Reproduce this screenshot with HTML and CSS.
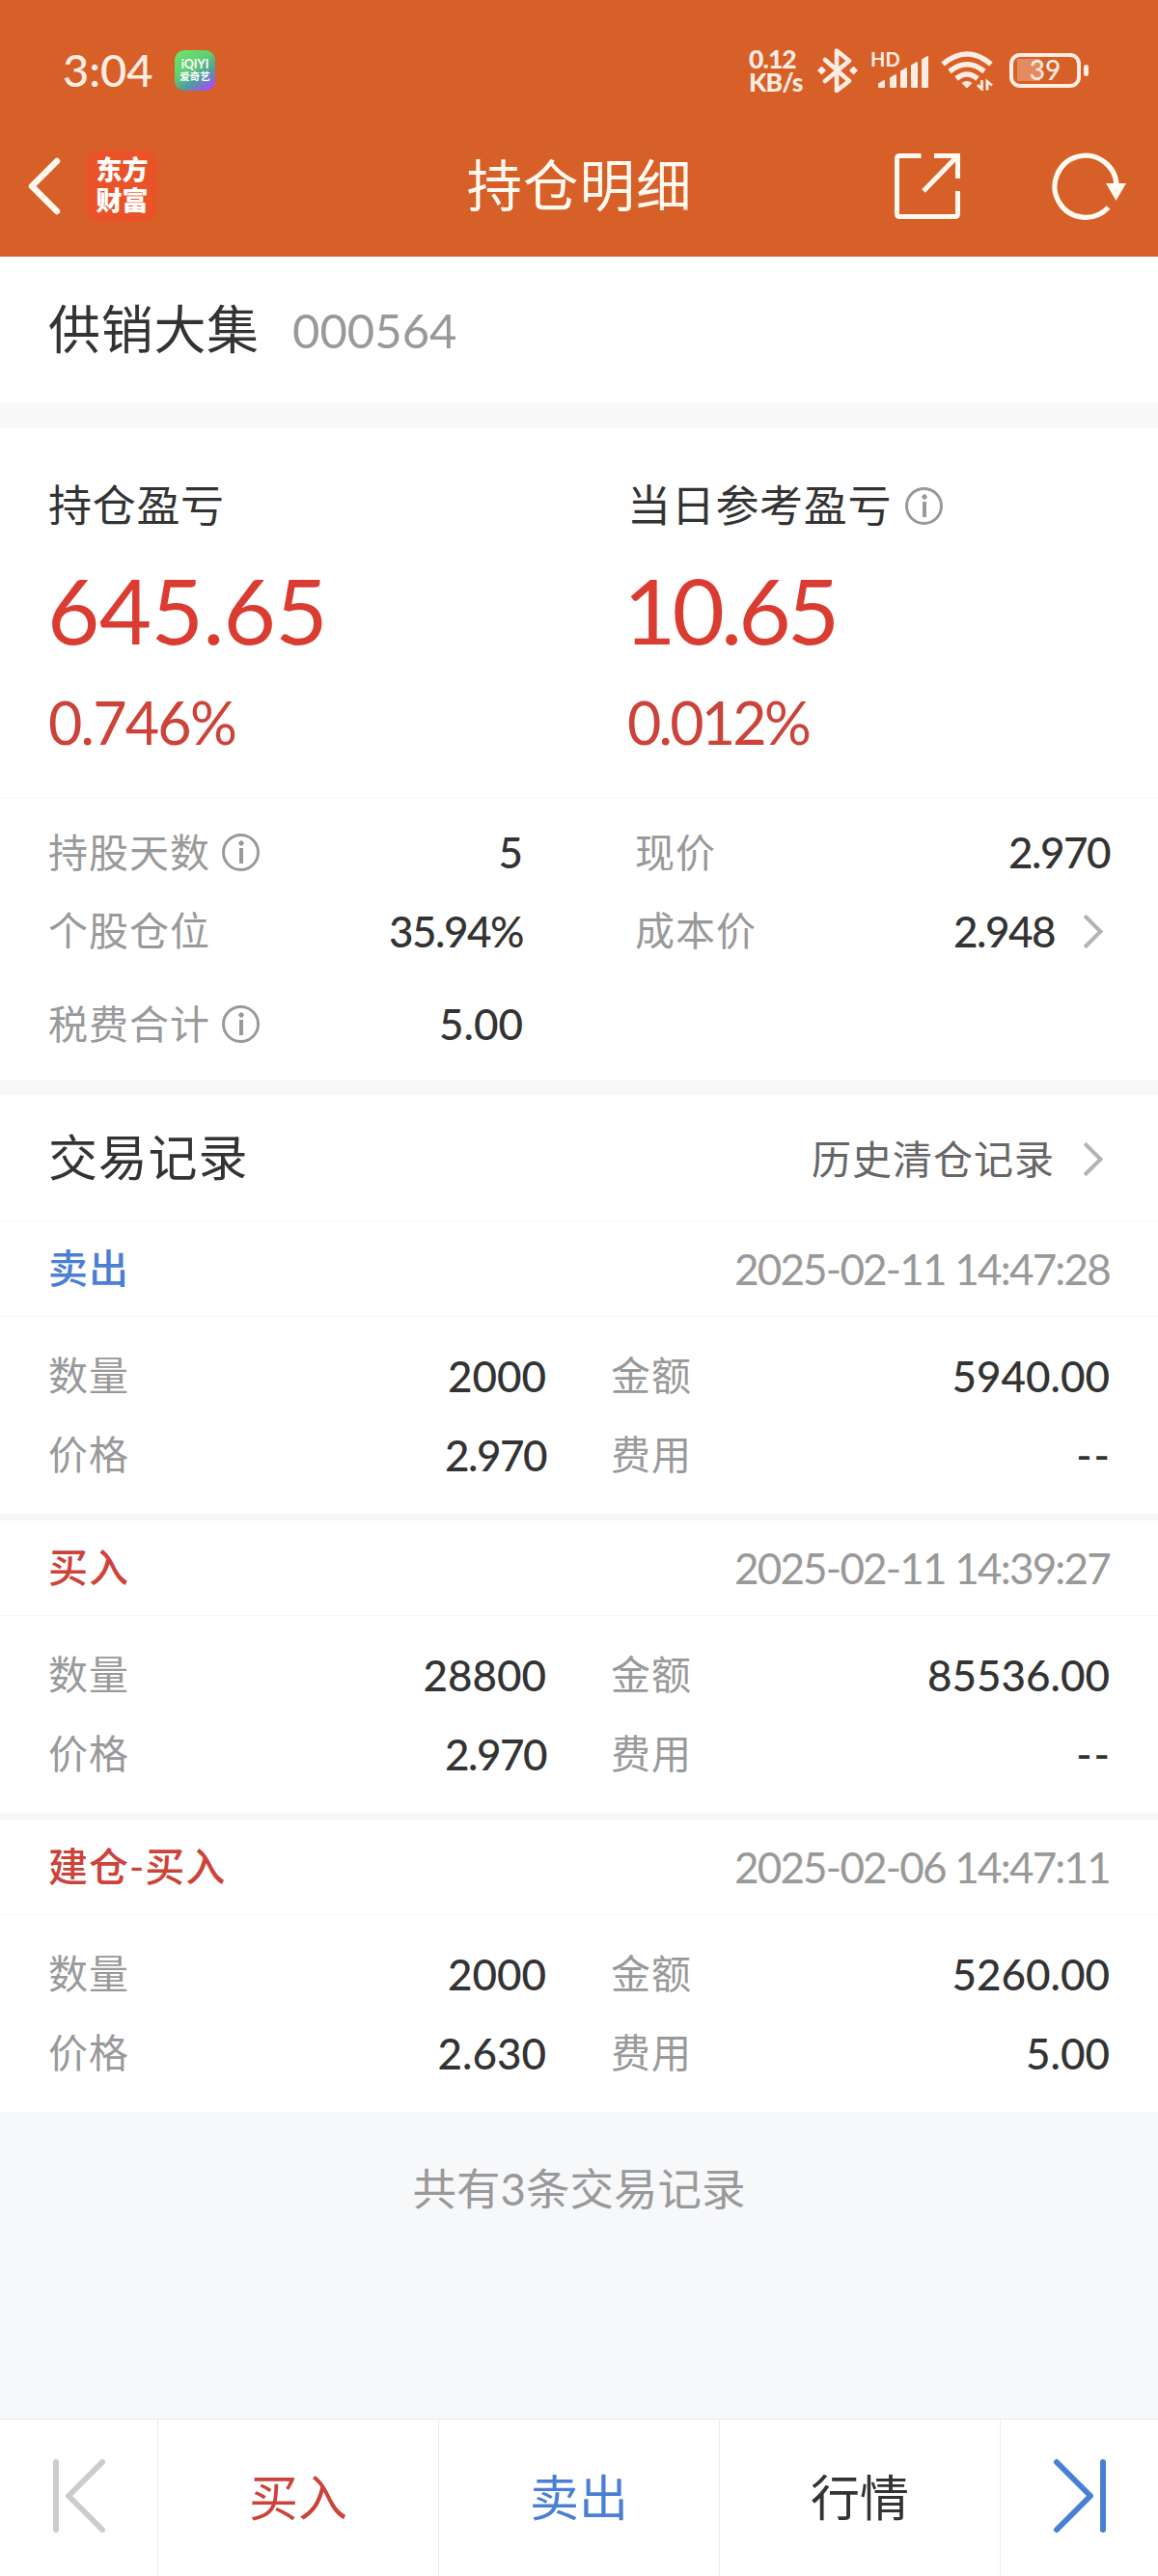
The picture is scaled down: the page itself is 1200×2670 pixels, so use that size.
FILE: index.html
```html
<!DOCTYPE html>
<html lang="zh-CN">
<head>
    <meta charset="UTF-8">
    <meta name="viewport" content="width=device-width, initial-scale=1.0">
    <title>持仓明细</title>
    <link rel="stylesheet" href="styles.css">
</head>
<body>
    <header class="header">
        <div class="status-bar">
            <div class="status-left">
                <span class="clock">3:04</span>
                <div class="iqiyi"><span class="iqiyi-en">iQIYI</span><span>爱奇艺</span></div>
            </div>
            <div class="status-right">
                <div class="net-speed"><span>0.12</span><span>KB/s</span></div>
                <svg class="bluetooth" width="42" height="46" viewBox="0 0 42 46" fill="none" stroke="currentColor" stroke-width="4.6" stroke-linecap="round" stroke-linejoin="round">
                    <path d="M8 12L33 34L20 44V2.5L33 13L8 34"></path>
                    <path d="M1 23L4.500 19.500L8 23L4.500 26.500ZM34 23L37.500 19.500L41 23L37.500 26.500Z" fill="currentColor" stroke-width="1.500"></path>
                </svg>
                <div class="signal">
                    <span class="hd">HD</span>
                    <svg width="60" height="38" viewBox="0 0 60 38" fill="currentColor" stroke="currentColor" stroke-width="2" stroke-linejoin="round">
                        <path d="M8 33L13 30V36H8ZM20 27L25 24V36H20ZM31 20L36 17V36H31ZM42 14L47 11V36H42ZM53 8L58 5V36H53Z"></path>
                    </svg>
                </div>
                <svg class="wifi" width="56" height="42" viewBox="0 0 56 42" fill="none" stroke="currentColor" stroke-width="5.500">
                    <path d="M2 14.500Q27 -6.500 52 14.500"></path>
                    <path d="M9 22Q27 7.500 45 22"></path>
                    <path d="M16 29.500Q27 20.500 38 29.500"></path>
                    <path d="M21.500 34Q27 30 32.500 34L27 39.500Z" fill="currentColor" stroke="none"></path>
                    <path d="M42.500 31V40.500L38 36M48 41.500V32.500L53 36.500" stroke-width="2.800"></path>
                </svg>
                <div class="battery"><span>39</span></div>
            </div>
        </div>
        <nav class="nav-bar">
            <div class="nav-left">
                <svg width="36" height="60" viewBox="0 0 36 60" fill="none" stroke="currentColor" stroke-width="6.500" stroke-linecap="round" stroke-linejoin="round">
                    <path d="M31 4L5 30L31 56"></path>
                </svg>
                <div class="brand">东方<br>财富</div>
            </div>
            <h1>持仓明细</h1>
            <div class="nav-right">
                <svg width="70" height="70" viewBox="0 0 70 70" fill="none" stroke="currentColor" stroke-width="5">
                    <path d="M28.500 3.500H6.500Q3.500 3.500 3.500 6.500V63.500Q3.500 66.500 6.500 66.500H63.500Q66.500 66.500 66.500 63.500V40M66.500 27V3.500H42M66 4L31 40"></path>
                </svg>
                <svg width="78" height="70" viewBox="0 0 78 70" fill="none" stroke="currentColor" stroke-width="5.200">
                    <path d="M67 35A32 32 0 1 0 58.500 57"></path>
                    <path d="M56 32H77L66.500 50Z" fill="currentColor" stroke="none"></path>
                </svg>
            </div>
        </nav>
    </header>

    <section class="stock">
        <h2>供销大集</h2>
        <span class="code">000564</span>
    </section>

    <section class="profit">
        <div class="profit-item">
            <div class="profit-label">持仓盈亏</div>
            <div class="amount">645.65</div>
            <div class="percent">0.746%</div>
        </div>
        <div class="profit-item">
            <div class="profit-label">当日参考盈亏<i class="info"></i></div>
            <div class="amount tight">10.65</div>
            <div class="percent tight">0.012%</div>
        </div>
    </section>

    <section class="holding">
        <div class="cell"><span>持股天数<i class="info"></i></span><b>5</b></div>
        <div class="cell"><span>现价</span><b class="narrow">2.970</b></div>
        <div class="cell"><span>个股仓位</span><b class="narrow">35.94%</b></div>
        <div class="cell more"><span>成本价</span><b class="narrow">2.948</b><i class="chevron"></i></div>
        <div class="cell"><span>税费合计<i class="info"></i></span><b>5.00</b></div>
    </section>

    <section class="records">
        <div class="records-head">
            <h3>交易记录</h3>
            <a class="history">历史清仓记录<i class="chevron"></i></a>
        </div>

        <article class="trade">
            <div class="trade-head"><span class="sell">卖出</span><time>2025-02-11 14:47:28</time></div>
            <div class="trade-body">
                <div class="cell"><span>数量</span><b>2000</b></div>
                <div class="cell"><span>金额</span><b>5940.00</b></div>
                <div class="cell"><span>价格</span><b class="narrow">2.970</b></div>
                <div class="cell"><span>费用</span><b class="empty">--</b></div>
            </div>
        </article>
        <article class="trade">
            <div class="trade-head"><span class="buy">买入</span><time>2025-02-11 14:39:27</time></div>
            <div class="trade-body">
                <div class="cell"><span>数量</span><b>28800</b></div>
                <div class="cell"><span>金额</span><b>85536.00</b></div>
                <div class="cell"><span>价格</span><b class="narrow">2.970</b></div>
                <div class="cell"><span>费用</span><b class="empty">--</b></div>
            </div>
        </article>
        <article class="trade">
            <div class="trade-head"><span class="buy">建仓-买入</span><time>2025-02-06 14:47:11</time></div>
            <div class="trade-body">
                <div class="cell"><span>数量</span><b>2000</b></div>
                <div class="cell"><span>金额</span><b>5260.00</b></div>
                <div class="cell"><span>价格</span><b>2.630</b></div>
                <div class="cell"><span>费用</span><b>5.00</b></div>
            </div>
        </article>
    </section>

    <p class="total">共有3条交易记录</p>

    <footer class="toolbar">
        <a class="step prev">
            <svg width="56" height="78" viewBox="0 0 56 78" fill="none" stroke="currentColor" stroke-width="6" stroke-linecap="round" stroke-linejoin="round">
                <path d="M4 4V74M52 4L17 39L52 74"></path>
            </svg>
        </a>
        <a class="buy">买入</a>
        <a class="sell">卖出</a>
        <a>行情</a>
        <a class="step next">
            <svg width="56" height="78" viewBox="0 0 56 78" fill="none" stroke="currentColor" stroke-width="6" stroke-linecap="round" stroke-linejoin="round">
                <path d="M52 4V74M4 4L39 39L4 74"></path>
            </svg>
        </a>
    </footer>
</body>
</html>
```
FILE: styles.css
```css
:root {
    --orange: #d75f28;
    --red: #db3c32;
    --buy: #cc4339;
    --blue: #4a7fd4;
    --text: #333333;
    --gray: #999999;
    --bg: #f7f8fa;
    --line: #f6f7f8;
}

* {
    margin: 0;
    padding: 0;
    box-sizing: border-box;
}

body {
    width: 1200px;
    height: 2670px;
    display: flex;
    flex-direction: column;
    background: var(--bg);
    color: var(--text);
    font-family: Lato, 'Noto Sans CJK SC', sans-serif;
    font-size: 41px;
    line-height: 1.2;
    white-space: nowrap;
}

svg {
    display: block;
    flex-shrink: 0;
}

h1,
h2,
h3,
b,
i {
    font-weight: 400;
    font-style: normal;
}

/* header */
.header {
    height: 266px;
    background: var(--orange);
    color: #fff9ef;
}

.status-bar {
    height: 119px;
    padding: 27px 72px 0 65px;
    display: flex;
    align-items: center;
    justify-content: space-between;
    color: #ffece2;
}

.status-left,
.status-right {
    display: flex;
    align-items: center;
}

.clock {
    width: 116px;
    padding-bottom: 2px;
    font-size: 47px;
    font-weight: 500;
}

.iqiyi {
    width: 42px;
    height: 42px;
    border-radius: 10px;
    display: flex;
    flex-direction: column;
    align-items: center;
    justify-content: center;
    background: linear-gradient(145deg, #6ee66d 0%, #62cc72 42%, #4e9da0 66%, #a84bff 92%);
    color: #fff;
    font-size: 10.5px;
    font-weight: 700;
    line-height: 12px;
}

.iqiyi-en {
    font-size: 12.5px;
}

.net-speed {
    width: 71px;
    display: flex;
    flex-direction: column;
    font-size: 26.5px;
    font-weight: 900;
    line-height: 24px;
    letter-spacing: -0.9px;
}

.bluetooth {
    margin-right: 13px;
}

.signal {
    position: relative;
    width: 73px;
}

.signal svg {
    margin-left: 1px;
}

.hd {
    position: absolute;
    left: 0;
    top: -4px;
    font-size: 20px;
    font-weight: 700;
    line-height: 22px;
}

.wifi {
    margin-right: 15px;
}

.battery {
    position: relative;
    width: 74px;
    height: 36px;
    margin-right: 8px;
    border: 4px solid currentColor;
    border-radius: 11px;
    text-align: center;
    font-size: 28px;
    font-weight: 500;
    line-height: 27px;
    background: linear-gradient(#e38a60, #e38a60) 4px 2px / 24px 23px no-repeat;
}

.battery::after {
    content: '';
    position: absolute;
    right: -12px;
    top: 8px;
    width: 5px;
    height: 12px;
    border-radius: 3px;
    background: currentColor;
}

.nav-bar {
    height: 147px;
    padding: 0 32px 0 28px;
    display: grid;
    grid-template-columns: 1fr auto 1fr;
    align-items: center;
}

.nav-left,
.nav-right {
    display: flex;
    align-items: center;
}

.nav-left {
    gap: 26px;
}

.nav-right {
    justify-content: flex-end;
    gap: 94px;
}

.brand {
    width: 73px;
    height: 74px;
    padding-top: 4px;
    border-radius: 14px;
    background: #ea5329;
    color: #fff;
    text-align: center;
    font-size: 27px;
    font-weight: 900;
    line-height: 32px;
}

.nav-bar h1 {
    padding: 0 0 2px 5px;
    font-size: 57.5px;
    letter-spacing: 1px;
}

/* stock name */
.stock {
    height: 152px;
    padding: 0 50px;
    display: flex;
    align-items: center;
    background: #fff;
    margin-bottom: 26px;
}

.stock h2 {
    width: 253px;
    font-size: 54px;
    letter-spacing: 0.7px;
}

.code {
    font-size: 49px;
    color: var(--gray);
}

/* profit and loss */
.profit {
    height: 384px;
    padding: 52px 50px 0;
    display: grid;
    grid-template-columns: 600px 1fr;
    background: #fff;
    border-bottom: 1px solid var(--line);
}

.profit-label {
    height: 56px;
    display: flex;
    align-items: center;
    font-size: 45px;
    letter-spacing: 0.7px;
}

.info {
    width: 39px;
    height: 39px;
    border: 3px solid var(--gray);
    border-radius: 50%;
    background:
        radial-gradient(circle, var(--gray) 2.4px, transparent 2.9px) center 4px / 6px 6px no-repeat,
        linear-gradient(var(--gray), var(--gray)) center 12px / 4px 16px no-repeat;
}

.profit-label .info {
    margin-left: 14px;
}

.amount {
    height: 162px;
    margin-left: -1px;
    font-size: 94px;
    line-height: 159px;
    letter-spacing: -0.8px;
    color: var(--red);
}

.amount.tight {
    margin-left: -4px;
    letter-spacing: -4px;
}

.percent {
    font-size: 61px;
    line-height: 70px;
    letter-spacing: -1.8px;
    color: var(--buy);
}

.percent.tight {
    letter-spacing: -2.8px;
}

/* label and value pair */
.cell {
    display: flex;
    align-items: center;
    justify-content: space-between;
}

.cell span {
    display: flex;
    align-items: center;
    color: var(--gray);
    letter-spacing: 1px;
}

.cell .info {
    margin-left: 12px;
}

.cell b {
    font-size: 44px;
    font-weight: 500;
}

.cell .narrow {
    letter-spacing: -1.5px;
}

.cell .empty {
    letter-spacing: 2px;
    margin-right: -2px;
}

.cell.more b {
    margin-left: auto;
}

.chevron {
    width: 25px;
    height: 25px;
    margin: 0 12px 0 20px;
    border: solid #b3b3b3;
    border-width: 4.5px 4.5px 0 0;
    transform: rotate(45deg);
}

.holding {
    height: 307px;
    padding: 15px 50px 0;
    display: grid;
    grid-template-columns: 492px 492px;
    grid-template-rows: 81px 82px 111px;
    column-gap: 116px;
    background: #fff;
    border-bottom: 16px solid var(--bg);
}

/* trade records */
.records-head {
    height: 130px;
    padding: 0 50px;
    display: flex;
    align-items: center;
    justify-content: space-between;
    background: #fff;
}

.records-head h3 {
    font-size: 51px;
    letter-spacing: 0.8px;
}

.history {
    padding-top: 3px;
    display: flex;
    align-items: center;
    color: #666;
    letter-spacing: 1px;
}

.trade {
    background: #fff;
    border-top: 7px solid #f7f7f9;
}

.trade:nth-of-type(1) {
    border-top: 1px solid var(--line);
}

.trade-head {
    height: 99px;
    padding: 0 50px;
    display: flex;
    align-items: center;
    justify-content: space-between;
    border-bottom: 1px solid var(--line);
    letter-spacing: 1px;
}

.trade-head span {
    font-weight: 500;
}

.trade-head time {
    font-size: 44px;
    letter-spacing: -1.8px;
    color: var(--gray);
}

.trade-body {
    height: 204px;
    padding: 20px 50px 0;
    display: grid;
    grid-template-columns: 516px 517px;
    grid-auto-rows: 82px;
    column-gap: 67px;
}

.buy {
    color: var(--buy);
}

.sell {
    color: var(--blue);
}

.total {
    height: 160px;
    text-align: center;
    font-size: 45.5px;
    line-height: 160px;
    color: var(--gray);
}

/* bottom bar */
.toolbar {
    height: 163px;
    margin-top: auto;
    display: grid;
    grid-template-columns: 164px 291px 291px 291px 163px;
    background: #fff;
    border-top: 1px solid #ececec;
}

.toolbar a {
    display: flex;
    align-items: center;
    justify-content: center;
    border-right: 1px solid #ececec;
    font-size: 51px;
}

.toolbar a:last-child {
    border-right: none;
}

.toolbar .step {
    padding-bottom: 5px;
}

.toolbar .prev {
    color: #cccccc;
}

.toolbar .next {
    color: var(--blue);
}
```
